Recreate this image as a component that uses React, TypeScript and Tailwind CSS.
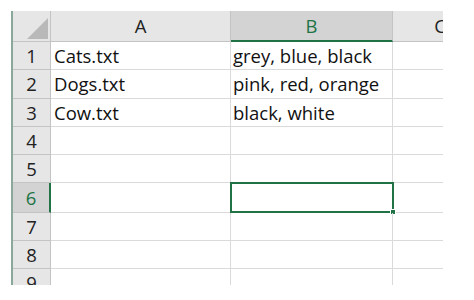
import React from "react";

const rows: { n: string; a: string; b: string; h: string }[] = [
  { n: "1", a: "Cats.txt", b: "grey, blue, black", h: "h-[28px]" },
  { n: "2", a: "Dogs.txt", b: "pink, red, orange", h: "h-[29px]" },
  { n: "3", a: "Cow.txt", b: "black, white", h: "h-[28px]" },
  { n: "4", a: "", b: "", h: "h-[28px]" },
  { n: "5", a: "", b: "", h: "h-[28px]" },
  { n: "6", a: "", b: "", h: "h-[30px]" },
  { n: "7", a: "", b: "", h: "h-[28px]" },
  { n: "8", a: "", b: "", h: "h-[28px]" },
  { n: "9", a: "", b: "", h: "h-[28px]" },
];

export default function App() {
  return (
    <div
      className="w-[474px] h-[300px] bg-white pl-[11px] pt-[11px] relative"
      style={{ fontFamily: '"Open Sans", "Noto Sans", sans-serif' }}
    >
      <div className="w-[432px] h-[274px] overflow-hidden border-l-2 border-[#8aa899] text-[18.5px] text-[#111]">
        <div className="flex flex-col w-[474px]">
          {/* header row */}
          <div className="flex h-[31px]">
            <div className="w-[38px] shrink-0 bg-[#e6e6e6] border-r border-b border-[#c4c4c4] relative">
              <svg className="absolute left-[14px] top-[7px]" width="21" height="21" viewBox="0 0 21 21">
                <polygon points="21,0 21,21 0,21" fill="#b9b9b9" />
              </svg>
            </div>
            <div className="w-[180px] shrink-0 bg-[#e6e6e6] border-r border-b border-[#c4c4c4] flex items-center justify-center text-[#222]">
              A
            </div>
            <div className="w-[162px] shrink-0 bg-[#d3d3d3] border-r border-[#c4c4c4] border-b-2 border-b-[#217346] flex items-center justify-center text-[#217346]">
              B
            </div>
            <div className="w-[94px] shrink-0 bg-[#e6e6e6] border-b border-[#c4c4c4] flex items-center justify-center text-[#222]">
              C
            </div>
          </div>
          {rows.map((r) => {
            const sel = r.n === "6";
            return (
              <div key={r.n} className={`flex ${r.h}`}>
                {sel ? (
                  <div className="w-[38px] shrink-0 bg-[#d3d3d3] border-b border-[#c4c4c4] border-r-2 border-r-[#217346] flex items-center justify-center text-[#217346]">
                    {r.n}
                  </div>
                ) : (
                  <div className="w-[38px] shrink-0 bg-[#e6e6e6] border-r border-b border-[#c4c4c4] flex items-center justify-center text-[#222]">
                    {r.n}
                  </div>
                )}
                <div className="w-[180px] shrink-0 border-r border-b border-[#dadada] flex items-center pl-[3px] whitespace-nowrap">
                  {r.a}
                </div>
                <div className="w-[162px] shrink-0 border-r border-b border-[#dadada] flex items-center pl-[2px] whitespace-nowrap relative">
                  {r.b}
                  {sel && (
                    <div className="absolute left-[-1px] top-[-1px] right-[-2px] bottom-[-1px] border-2 border-[#217346]">
                      <div className="absolute right-[-4px] bottom-[-4px] w-[6px] h-[6px] bg-[#217346] border border-white" />
                    </div>
                  )}
                </div>
                <div className="w-[94px] shrink-0 border-b border-[#dadada]" />
              </div>
            );
          })}
        </div>
      </div>
    </div>
  );
}
